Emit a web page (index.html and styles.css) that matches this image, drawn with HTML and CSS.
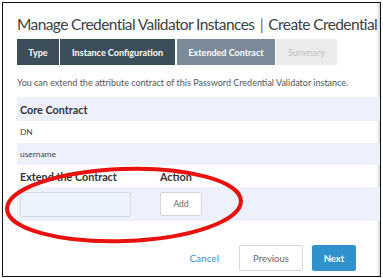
FILE: index.html
```html
<!DOCTYPE html>
<html lang="en">
<head>
    <meta charset="UTF-8">
    <title>Manage Credential Validator Instances</title>
    <link rel="stylesheet" href="styles.css">
</head>
<body>
    <div class="frame">
        <h1 class="title">Manage Credential Validator Instances <span class="sep">|</span> Create Credential</h1>

        <div class="tabs">
            <div class="tab done tab-type">Type</div>
            <div class="tab done tab-config">Instance Configuration</div>
            <div class="tab active tab-ext">Extended Contract</div>
            <div class="tab todo tab-sum">Summary</div>
        </div>

        <p class="intro">You can extend the attribute contract of this Password Credential Validator instance.</p>

        <div class="row head shaded">Core Contract</div>
        <div class="row">DN</div>
        <div class="row shaded">username</div>

        <div class="row head cols">
            <div class="col-name">Extend the Contract</div>
            <div class="col-action">Action</div>
        </div>
        <div class="row shaded cols input-row">
            <div class="col-name"><div class="field"></div></div>
            <div class="col-action"><button class="btn small">Add</button></div>
        </div>

        <div class="footer">
            <a class="cancel">Cancel</a>
            <button class="btn prev">Previous</button>
            <button class="btn primary">Next</button>
        </div>

        <svg class="ring" width="250" height="90" viewBox="0 0 250 90">
            <ellipse cx="120" cy="43" rx="117" ry="36" fill="none" stroke="#e8110d" stroke-width="4" transform="rotate(-2 120 43)"/>
        </svg>
    </div>
</body>
</html>
```
FILE: styles.css
```css
body {
    margin: 0;
    background: #fff;
    font-family: Lato, "Liberation Sans", sans-serif;
}
.frame {
    position: relative;
    box-sizing: border-box;
    width: 379px;
    height: 275px;
    margin: 2px 0 0 2px;
    border: 1.5px solid #111;
    padding-left: 14px;
    overflow: hidden;
    box-shadow: inset -4px 0 3px -2px #d8d8d8;
}
.title {
    margin: 12px 0 0;
    font-size: 15.5px;
    font-weight: 400;
    letter-spacing: -0.6px;
    color: #3a3f44;
    white-space: nowrap;
}
.sep {
    color: #666;
    margin: 0 2px;
}
.tabs {
    display: flex;
    margin-top: 6px;
    height: 26px;
}
.tab {
    display: flex;
    align-items: center;
    justify-content: center;
    font-size: 9px;
    font-weight: 700;
    color: #fff;
}
.done {
    background: #3c4e59;
}
.active {
    background: #7b8a98;
}
.todo {
    background: #ebebeb;
    color: #c2c2c2;
    font-weight: 400;
}
.tab-type { width: 42px; margin-right: 1px; }
.tab-config { width: 115px; margin-right: 2px; }
.tab-ext { width: 98px; margin-right: 1px; }
.tab-sum { width: 61px; }
.intro {
    margin: 12px 0 9px;
    font-size: 9px;
    color: #555;
}
.row {
    display: flex;
    align-items: center;
    height: 22px;
    padding-left: 3px;
    font-size: 8.4px;
    color: #444;
}
.shaded {
    background: #eef1fb;
}
.head {
    height: 24px;
    font-size: 10.8px;
    font-weight: 700;
    color: #333;
}
.head.cols {
    height: 22px;
}
.cols .col-name {
    width: 140px;
}
.input-row {
    height: 34px;
}
.field {
    width: 111px;
    height: 25px;
    box-sizing: border-box;
    background: #edf3fc;
    border: 1px solid #d3dbe6;
    border-radius: 2px;
}
.btn {
    box-sizing: border-box;
    font-family: inherit;
    background: #fff;
    border: 1px solid #d6d6d6;
    border-radius: 2px;
    color: #666;
    padding: 0;
}
.small {
    width: 42px;
    height: 24px;
    font-size: 8.5px;
}
.footer {
    display: flex;
    align-items: center;
    justify-content: flex-end;
    margin-top: 24px;
    padding-right: 24px;
}
.cancel {
    font-size: 10px;
    color: #3b8ec8;
    margin-right: 20px;
}
.prev {
    width: 64px;
    height: 26px;
    font-size: 9.5px;
    margin-right: 9px;
}
.primary {
    width: 44px;
    height: 26px;
    font-size: 9.5px;
    font-weight: 700;
    background: #2f92cc;
    border-color: #2f92cc;
    color: #fff;
}
.ring {
    position: absolute;
    left: 1px;
    top: 159px;
}
```
